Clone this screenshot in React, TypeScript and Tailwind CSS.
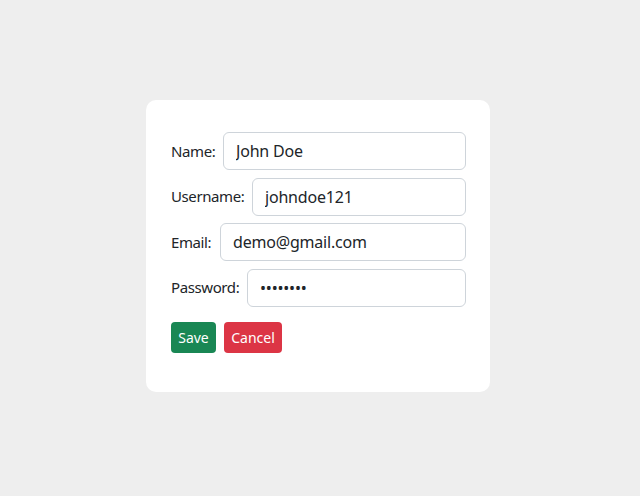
import React from "react";

const font = { fontFamily: '"Noto Sans", "Open Sans", Arial, sans-serif' };

function Row({ label, w, value, type = "text" }: { label: string; w: string; value: string; type?: string }) {
  return (
    <div className="flex items-center gap-2">
      <label className={`${w} shrink-0 whitespace-nowrap text-[15px] tracking-[-0.4px] text-[#212529]`}>{label}</label>
      <input
        type={type}
        defaultValue={value}
        readOnly
        className="h-[38px] min-w-0 flex-1 rounded-[6px] border border-[#ced4da] bg-white px-3 text-[16px] tracking-[-0.2px] text-[#212529] outline-none"
        style={font}
      />
    </div>
  );
}

export default function App() {
  return (
    <div className="min-h-screen bg-[#eeeeee] pl-[146px] pt-[100px]" style={font}>
      <div className="flex h-[292px] w-[344px] flex-col rounded-[10px] bg-white pl-[25px] pr-[24px] pt-[32px]">
        <div className="flex flex-col gap-[7.5px]">
          <Row label="Name:" w="w-[44px]" value="John Doe" />
          <Row label="Username:" w="w-[73px]" value="johndoe121" />
          <Row label="Email:" w="w-[41px]" value="demo@gmail.com" />
          <Row label="Password:" w="w-[68px]" value="12345678" type="password" />
        </div>
        <div className="mt-[15px] flex gap-2">
          <button className="h-[31px] w-[45px] rounded-[4px] bg-[#198754] text-[14px] text-white">Save</button>
          <button className="h-[31px] w-[58px] rounded-[4px] bg-[#dc3545] text-[14px] text-white">Cancel</button>
        </div>
      </div>
    </div>
  );
}
